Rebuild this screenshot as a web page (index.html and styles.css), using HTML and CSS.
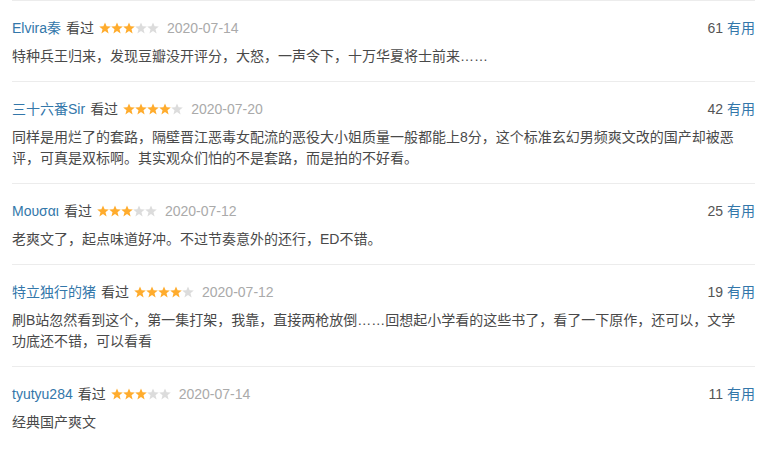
FILE: index.html
```html
<!DOCTYPE html>
<html lang="zh">
<head>
<meta charset="utf-8">
<link rel="stylesheet" href="styles.css">
</head>
<body>
<div class="list">
  <div class="item">
    <div class="head">
      <div class="info">
        <a class="name">Elvira秦</a><span class="status">看过</span>
        <span class="stars"><svg viewBox="0 0 60 12" width="60" height="12"><g class="on"><polygon points="6,0.4 7.6,4.3 11.8,4.5 8.5,7.2 9.6,11.4 6,9.1 2.4,11.4 3.5,7.2 0.2,4.5 4.4,4.3"/><polygon transform="translate(12 0)" points="6,0.4 7.6,4.3 11.8,4.5 8.5,7.2 9.6,11.4 6,9.1 2.4,11.4 3.5,7.2 0.2,4.5 4.4,4.3"/><polygon transform="translate(24 0)" points="6,0.4 7.6,4.3 11.8,4.5 8.5,7.2 9.6,11.4 6,9.1 2.4,11.4 3.5,7.2 0.2,4.5 4.4,4.3"/></g><g class="off"><polygon transform="translate(36 0)" points="6,0.4 7.6,4.3 11.8,4.5 8.5,7.2 9.6,11.4 6,9.1 2.4,11.4 3.5,7.2 0.2,4.5 4.4,4.3"/><polygon transform="translate(48 0)" points="6,0.4 7.6,4.3 11.8,4.5 8.5,7.2 9.6,11.4 6,9.1 2.4,11.4 3.5,7.2 0.2,4.5 4.4,4.3"/></g></svg></span>
        <span class="date">2020-07-14</span>
      </div>
      <div class="votes"><span class="count">61</span><a class="useful">有用</a></div>
    </div>
    <p class="text">特种兵王归来，发现豆瓣没开评分，大怒，一声令下，十万华夏将士前来……</p>
  </div>

  <div class="item">
    <div class="head">
      <div class="info">
        <a class="name">三十六番Sir</a><span class="status">看过</span>
        <span class="stars"><svg viewBox="0 0 60 12" width="60" height="12"><g class="on"><polygon points="6,0.4 7.6,4.3 11.8,4.5 8.5,7.2 9.6,11.4 6,9.1 2.4,11.4 3.5,7.2 0.2,4.5 4.4,4.3"/><polygon transform="translate(12 0)" points="6,0.4 7.6,4.3 11.8,4.5 8.5,7.2 9.6,11.4 6,9.1 2.4,11.4 3.5,7.2 0.2,4.5 4.4,4.3"/><polygon transform="translate(24 0)" points="6,0.4 7.6,4.3 11.8,4.5 8.5,7.2 9.6,11.4 6,9.1 2.4,11.4 3.5,7.2 0.2,4.5 4.4,4.3"/><polygon transform="translate(36 0)" points="6,0.4 7.6,4.3 11.8,4.5 8.5,7.2 9.6,11.4 6,9.1 2.4,11.4 3.5,7.2 0.2,4.5 4.4,4.3"/></g><g class="off"><polygon transform="translate(48 0)" points="6,0.4 7.6,4.3 11.8,4.5 8.5,7.2 9.6,11.4 6,9.1 2.4,11.4 3.5,7.2 0.2,4.5 4.4,4.3"/></g></svg></span>
        <span class="date">2020-07-20</span>
      </div>
      <div class="votes"><span class="count">42</span><a class="useful">有用</a></div>
    </div>
    <p class="text">同样是用烂了的套路，隔壁晋江恶毒女配流的恶役大小姐质量一般都能上8分，这个标准玄幻男频爽文改的国产却被恶评，可真是双标啊。其实观众们怕的不是套路，而是拍的不好看。</p>
  </div>

  <div class="item">
    <div class="head">
      <div class="info">
        <a class="name">Μουσαι</a><span class="status">看过</span>
        <span class="stars"><svg viewBox="0 0 60 12" width="60" height="12"><g class="on"><polygon points="6,0.4 7.6,4.3 11.8,4.5 8.5,7.2 9.6,11.4 6,9.1 2.4,11.4 3.5,7.2 0.2,4.5 4.4,4.3"/><polygon transform="translate(12 0)" points="6,0.4 7.6,4.3 11.8,4.5 8.5,7.2 9.6,11.4 6,9.1 2.4,11.4 3.5,7.2 0.2,4.5 4.4,4.3"/><polygon transform="translate(24 0)" points="6,0.4 7.6,4.3 11.8,4.5 8.5,7.2 9.6,11.4 6,9.1 2.4,11.4 3.5,7.2 0.2,4.5 4.4,4.3"/></g><g class="off"><polygon transform="translate(36 0)" points="6,0.4 7.6,4.3 11.8,4.5 8.5,7.2 9.6,11.4 6,9.1 2.4,11.4 3.5,7.2 0.2,4.5 4.4,4.3"/><polygon transform="translate(48 0)" points="6,0.4 7.6,4.3 11.8,4.5 8.5,7.2 9.6,11.4 6,9.1 2.4,11.4 3.5,7.2 0.2,4.5 4.4,4.3"/></g></svg></span>
        <span class="date">2020-07-12</span>
      </div>
      <div class="votes"><span class="count">25</span><a class="useful">有用</a></div>
    </div>
    <p class="text">老爽文了，起点味道好冲。不过节奏意外的还行，ED不错。</p>
  </div>

  <div class="item">
    <div class="head">
      <div class="info">
        <a class="name">特立独行的猪</a><span class="status">看过</span>
        <span class="stars"><svg viewBox="0 0 60 12" width="60" height="12"><g class="on"><polygon points="6,0.4 7.6,4.3 11.8,4.5 8.5,7.2 9.6,11.4 6,9.1 2.4,11.4 3.5,7.2 0.2,4.5 4.4,4.3"/><polygon transform="translate(12 0)" points="6,0.4 7.6,4.3 11.8,4.5 8.5,7.2 9.6,11.4 6,9.1 2.4,11.4 3.5,7.2 0.2,4.5 4.4,4.3"/><polygon transform="translate(24 0)" points="6,0.4 7.6,4.3 11.8,4.5 8.5,7.2 9.6,11.4 6,9.1 2.4,11.4 3.5,7.2 0.2,4.5 4.4,4.3"/><polygon transform="translate(36 0)" points="6,0.4 7.6,4.3 11.8,4.5 8.5,7.2 9.6,11.4 6,9.1 2.4,11.4 3.5,7.2 0.2,4.5 4.4,4.3"/></g><g class="off"><polygon transform="translate(48 0)" points="6,0.4 7.6,4.3 11.8,4.5 8.5,7.2 9.6,11.4 6,9.1 2.4,11.4 3.5,7.2 0.2,4.5 4.4,4.3"/></g></svg></span>
        <span class="date">2020-07-12</span>
      </div>
      <div class="votes"><span class="count">19</span><a class="useful">有用</a></div>
    </div>
    <p class="text">刷B站忽然看到这个，第一集打架，我靠，直接两枪放倒……回想起小学看的这些书了，看了一下原作，还可以，文学功底还不错，可以看看</p>
  </div>

  <div class="item">
    <div class="head">
      <div class="info">
        <a class="name">tyutyu284</a><span class="status">看过</span>
        <span class="stars"><svg viewBox="0 0 60 12" width="60" height="12"><g class="on"><polygon points="6,0.4 7.6,4.3 11.8,4.5 8.5,7.2 9.6,11.4 6,9.1 2.4,11.4 3.5,7.2 0.2,4.5 4.4,4.3"/><polygon transform="translate(12 0)" points="6,0.4 7.6,4.3 11.8,4.5 8.5,7.2 9.6,11.4 6,9.1 2.4,11.4 3.5,7.2 0.2,4.5 4.4,4.3"/><polygon transform="translate(24 0)" points="6,0.4 7.6,4.3 11.8,4.5 8.5,7.2 9.6,11.4 6,9.1 2.4,11.4 3.5,7.2 0.2,4.5 4.4,4.3"/></g><g class="off"><polygon transform="translate(36 0)" points="6,0.4 7.6,4.3 11.8,4.5 8.5,7.2 9.6,11.4 6,9.1 2.4,11.4 3.5,7.2 0.2,4.5 4.4,4.3"/><polygon transform="translate(48 0)" points="6,0.4 7.6,4.3 11.8,4.5 8.5,7.2 9.6,11.4 6,9.1 2.4,11.4 3.5,7.2 0.2,4.5 4.4,4.3"/></g></svg></span>
        <span class="date">2020-07-14</span>
      </div>
      <div class="votes"><span class="count">11</span><a class="useful">有用</a></div>
    </div>
    <p class="text">经典国产爽文</p>
  </div>
</div>
</body>
</html>
```

FILE: styles.css
```css
html, body {
  margin: 0;
  padding: 0;
  background: #fff;
}
body {
  font-family: "Liberation Sans", "Noto Sans CJK SC", sans-serif;
  font-size: 14px;
  color: #494949;
}
.list {
  width: 743px;
  margin-left: 12px;
}
.item {
  border-top: 1px solid #ececec;
  padding: 17px 0 14px;
}
.head {
  display: flex;
  justify-content: space-between;
  align-items: center;
  height: 20px;
  line-height: 20px;
}
.info {
  display: flex;
  align-items: center;
}
.name {
  color: #3377aa;
  margin-right: 5px;
}
.status {
  color: #494949;
  margin-right: 5px;
}
.stars {
  display: flex;
  margin-right: 8px;
}
.stars svg {
  display: block;
}
.on polygon {
  fill: #ffac2d;
}
.off polygon {
  fill: #dcdcdc;
}
.date {
  color: #aaaaaa;
}
.votes {
  display: flex;
}
.count {
  color: #555;
  margin-right: 4px;
}
.useful {
  color: #3377aa;
}
.text {
  margin: 8px 0 0;
  padding-right: 8px;
  line-height: 21px;
  color: #494949;
}
```
